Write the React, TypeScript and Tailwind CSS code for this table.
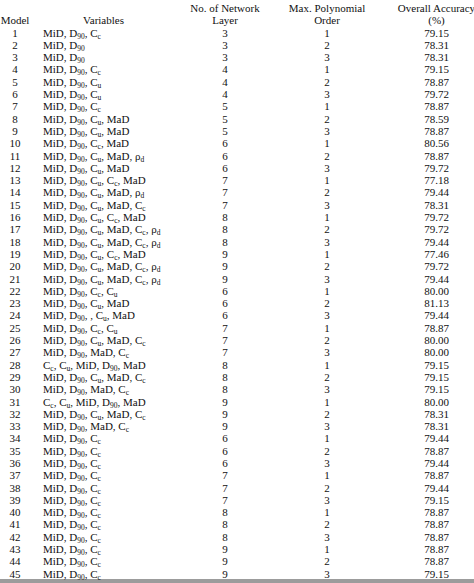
import React from 'react';

type Row = [number, string, number, number, string];

const rows: Row[] = [
  [1, 'MiD, D_90, C_c', 3, 1, '79.15'],
  [2, 'MiD, D_90', 3, 2, '78.31'],
  [3, 'MiD, D_90', 3, 3, '78.31'],
  [4, 'MiD, D_90, C_c', 4, 1, '79.15'],
  [5, 'MiD, D_90, C_u', 4, 2, '78.87'],
  [6, 'MiD, D_90, C_u', 4, 3, '79.72'],
  [7, 'MiD, D_90, C_c', 5, 1, '78.87'],
  [8, 'MiD, D_90, C_u, MaD', 5, 2, '78.59'],
  [9, 'MiD, D_90, C_u, MaD', 5, 3, '78.87'],
  [10, 'MiD, D_90, C_c, MaD', 6, 1, '80.56'],
  [11, 'MiD, D_90, C_u, MaD, ρ_d', 6, 2, '78.87'],
  [12, 'MiD, D_90, C_u, MaD', 6, 3, '79.72'],
  [13, 'MiD, D_90, C_u, C_c, MaD', 7, 1, '77.18'],
  [14, 'MiD, D_90, C_u, MaD, ρ_d', 7, 2, '79.44'],
  [15, 'MiD, D_90, C_u, MaD, C_c', 7, 3, '78.31'],
  [16, 'MiD, D_90, C_u, C_c, MaD', 8, 1, '79.72'],
  [17, 'MiD, D_90, C_u, MaD, C_c, ρ_d', 8, 2, '79.72'],
  [18, 'MiD, D_90, C_u, MaD, C_c, ρ_d', 8, 3, '79.44'],
  [19, 'MiD, D_90, C_u, C_c, MaD', 9, 1, '77.46'],
  [20, 'MiD, D_90, C_u, MaD, C_c, ρ_d', 9, 2, '79.72'],
  [21, 'MiD, D_90, C_u, MaD, C_c, ρ_d', 9, 3, '79.44'],
  [22, 'MiD, D_90, C_c, C_u', 6, 1, '80.00'],
  [23, 'MiD, D_90, C_u, MaD', 6, 2, '81.13'],
  [24, 'MiD, D_90, , C_u, MaD', 6, 3, '79.44'],
  [25, 'MiD, D_90, C_c, C_u', 7, 1, '78.87'],
  [26, 'MiD, D_90, C_u, MaD, C_c', 7, 2, '80.00'],
  [27, 'MiD, D_90, MaD, C_c', 7, 3, '80.00'],
  [28, 'C_c, C_u, MiD, D_90, MaD', 8, 1, '79.15'],
  [29, 'MiD, D_90, C_u, MaD, C_c', 8, 2, '79.15'],
  [30, 'MiD, D_90, MaD, C_c', 8, 3, '79.15'],
  [31, 'C_c, C_u, MiD, D_90, MaD', 9, 1, '80.00'],
  [32, 'MiD, D_90, C_u, MaD, C_c', 9, 2, '78.31'],
  [33, 'MiD, D_90, MaD, C_c', 9, 3, '78.31'],
  [34, 'MiD, D_90, C_c', 6, 1, '79.44'],
  [35, 'MiD, D_90, C_c', 6, 2, '78.87'],
  [36, 'MiD, D_90, C_c', 6, 3, '79.44'],
  [37, 'MiD, D_90, C_c', 7, 1, '78.87'],
  [38, 'MiD, D_90, C_c', 7, 2, '79.44'],
  [39, 'MiD, D_90, C_c', 7, 3, '79.15'],
  [40, 'MiD, D_90, C_c', 8, 1, '78.87'],
  [41, 'MiD, D_90, C_c', 8, 2, '78.87'],
  [42, 'MiD, D_90, C_c', 8, 3, '78.87'],
  [43, 'MiD, D_90, C_c', 9, 1, '78.87'],
  [44, 'MiD, D_90, C_c', 9, 2, '78.87'],
  [45, 'MiD, D_90, C_c', 9, 3, '79.15'],
];

// "D_90" -> D with subscript 90
const Vars: React.FC<{ text: string }> = ({ text }) => {
  const parts = text.split(', ');
  return (
    <>
      {parts.map((p, i) => {
        const [base, sub] = p.split('_');
        return (
          <React.Fragment key={i}>
            {base}
            {sub && <span className="relative top-[2px] text-[7.5px] leading-none">{sub}</span>}
            {i < parts.length - 1 && ', '}
          </React.Fragment>
        );
      })}
    </>
  );
};

const cols = 'grid grid-cols-[30px_147px_96px_108px_111px]';

export default function App() {
  return (
    <div className="w-[474px] h-[583px] overflow-hidden bg-white text-[#111] font-['Liberation_Serif',serif] text-[11px] leading-[12.3px] whitespace-nowrap">
      <div className={`${cols} pt-[2px]`}>
        <div className="flex flex-col justify-end text-center">Model</div>
        <div className="flex flex-col justify-end text-center">Variables</div>
        <div className="text-center">
          <div>No. of Network</div>
          <div>Layer</div>
        </div>
        <div className="text-center">
          <div>Max. Polynomial</div>
          <div>Order</div>
        </div>
        <div className="text-center">
          <div>Overall Accuracy</div>
          <div>(%)</div>
        </div>
      </div>
      {rows.map(([n, v, layer, order, acc]) => (
        <div key={n} className={`${cols} h-[12.3px]`}>
          <div className="text-center">{n}</div>
          <div className="pl-[13px]">
            <Vars text={v} />
          </div>
          <div className="text-center">{layer}</div>
          <div className="text-center">{order}</div>
          <div className="text-center">{acc}</div>
        </div>
      ))}
      <div className="h-[5px] bg-[#9c9c9c] -mt-[1px]" />
    </div>
  );
}
